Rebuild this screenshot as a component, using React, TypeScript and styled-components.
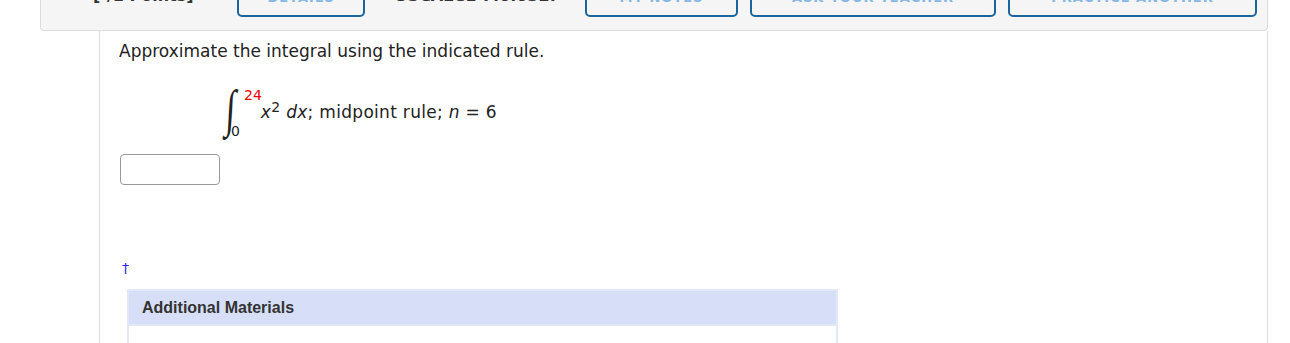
import styled, { createGlobalStyle } from "styled-components"

const GlobalStyle = createGlobalStyle`
	body {
		margin: 0;
		background: #fff;
		font-family: "DejaVu Sans", Verdana, sans-serif;
	}
`

const Page = styled.div`
	width: 1290px;
	height: 343px;
	overflow: hidden;
`

const HeaderBar = styled.div`
	margin-left: 40px;
	width: 1228px;
	height: 31px;
	box-sizing: border-box;
	background: #f5f5f5;
	border: 1px solid #dcdcdc;
	border-top: none;
	border-radius: 0 0 4px 4px;
	display: flex;
	align-items: flex-start;
	padding-left: 52px;
	overflow: hidden;

	& > * {
		flex-shrink: 0;
	}
`

const HeaderText = styled.span<{ $width: number }>`
	width: ${(p) => p.$width}px;
	font-size: 16px;
	font-weight: bold;
	line-height: 16px;
	color: #333;
	margin-top: -12px;
	white-space: nowrap;
`

const Assignment = styled(HeaderText)`
	margin-left: 17px;
	margin-right: 16px;
`

const HeaderButton = styled.div<{ $width: number }>`
	width: ${(p) => p.$width}px;
	height: 36px;
	margin-top: -19px;
	margin-right: 12px;
	box-sizing: border-box;
	border: 2px solid #1a659d;
	border-radius: 5px;
	display: flex;
	align-items: flex-end;
	justify-content: center;
	padding-bottom: 11px;
	font-size: 13px;
	line-height: 13px;
	font-weight: bold;
	letter-spacing: 1px;
	color: #86b7e3;
	white-space: nowrap;
`

const Panel = styled.div`
	margin-left: 99px;
	width: 1169px;
	height: 320px;
	box-sizing: border-box;
	border-left: 1px solid #dcdcdc;
	border-right: 1px solid #dcdcdc;
	padding: 8px 20px 0 19px;
`

const Question = styled.p`
	margin: 0;
	font-size: 17px;
	line-height: 24px;
	color: #222;
`

const MathRow = styled.div`
	display: flex;
	align-items: flex-start;
	margin: 25px 0 0 103px;
	height: 50px;
`

const IntegralSign = styled.span`
	width: 5px;
	min-width: 0;
	height: 50px;
	margin: -4px 0 0 4px;
	font-family: "Liberation Serif", serif;
	font-size: 44px;
	line-height: 50px;
	display: inline-block;
	transform: scale(0.78, 1.18) skewX(-5deg);
	transform-origin: 0 50%;
	color: #222;
`

const Limits = styled.div`
	display: flex;
	flex-direction: column;
	justify-content: space-between;
	height: 50px;
	font-size: 14px;
	line-height: 14px;
`

const Upper = styled.span`
	color: #e00;
	margin-left: 13px;
`

const Lower = styled.span`
	color: #222;
`

const Expression = styled.span`
	font-size: 17px;
	line-height: 24px;
	letter-spacing: 0.3px;
	color: #222;
	margin: 12px 0 0 -1px;
	white-space: pre;

	i {
		font-style: italic;
	}

	sup {
		font-size: 14px;
		line-height: 0;
		vertical-align: 6px;
	}
`

const AnswerBox = styled.input`
	display: block;
	margin: 16px 0 0 1px;
	width: 100px;
	height: 31px;
	box-sizing: border-box;
	border: 1px solid #999;
	border-radius: 4px;
	background: #fff;
`

const Dagger = styled.div`
	margin: 75px 0 0 3px;
	font-size: 14px;
	line-height: 16px;
	color: #2a2aff;
`

const Materials = styled.div`
	margin: 13px 0 0 8px;
	width: 711px;
	height: 60px;
	box-sizing: border-box;
	border: 2px solid #e3e8f8;
	border-bottom: none;
`

const MaterialsHeader = styled.div`
	height: 33px;
	background: #d6dff7;
	border-bottom: 2px solid #e3e8f8;
	display: flex;
	align-items: center;
	padding-left: 13px;
	font-family: "Liberation Sans", Arial, sans-serif;
	font-size: 16px;
	font-weight: bold;
	color: #333;
`

export default function App() {
	return (
		<Page>
			<GlobalStyle />
			<HeaderBar>
				<HeaderText $width={144}>[-/1 Points]</HeaderText>
				<HeaderButton $width={128}>DETAILS</HeaderButton>
				<Assignment $width={175}>OSCALC1 7.6.032.</Assignment>
				<HeaderButton $width={153}>MY NOTES</HeaderButton>
				<HeaderButton $width={246}>ASK YOUR TEACHER</HeaderButton>
				<HeaderButton $width={249}>PRACTICE ANOTHER</HeaderButton>
			</HeaderBar>
			<Panel>
				<Question>Approximate the integral using the indicated rule.</Question>
				<MathRow>
					<IntegralSign>∫</IntegralSign>
					<Limits>
						<Upper>24</Upper>
						<Lower>0</Lower>
					</Limits>
					<Expression>
						<i>x</i>
						<sup>2</sup> <i>dx</i>; midpoint rule; <i>n</i> = 6
					</Expression>
				</MathRow>
				<AnswerBox type="text" />
				<Dagger>†</Dagger>
				<Materials>
					<MaterialsHeader>Additional Materials</MaterialsHeader>
				</Materials>
			</Panel>
		</Page>
	)
}
